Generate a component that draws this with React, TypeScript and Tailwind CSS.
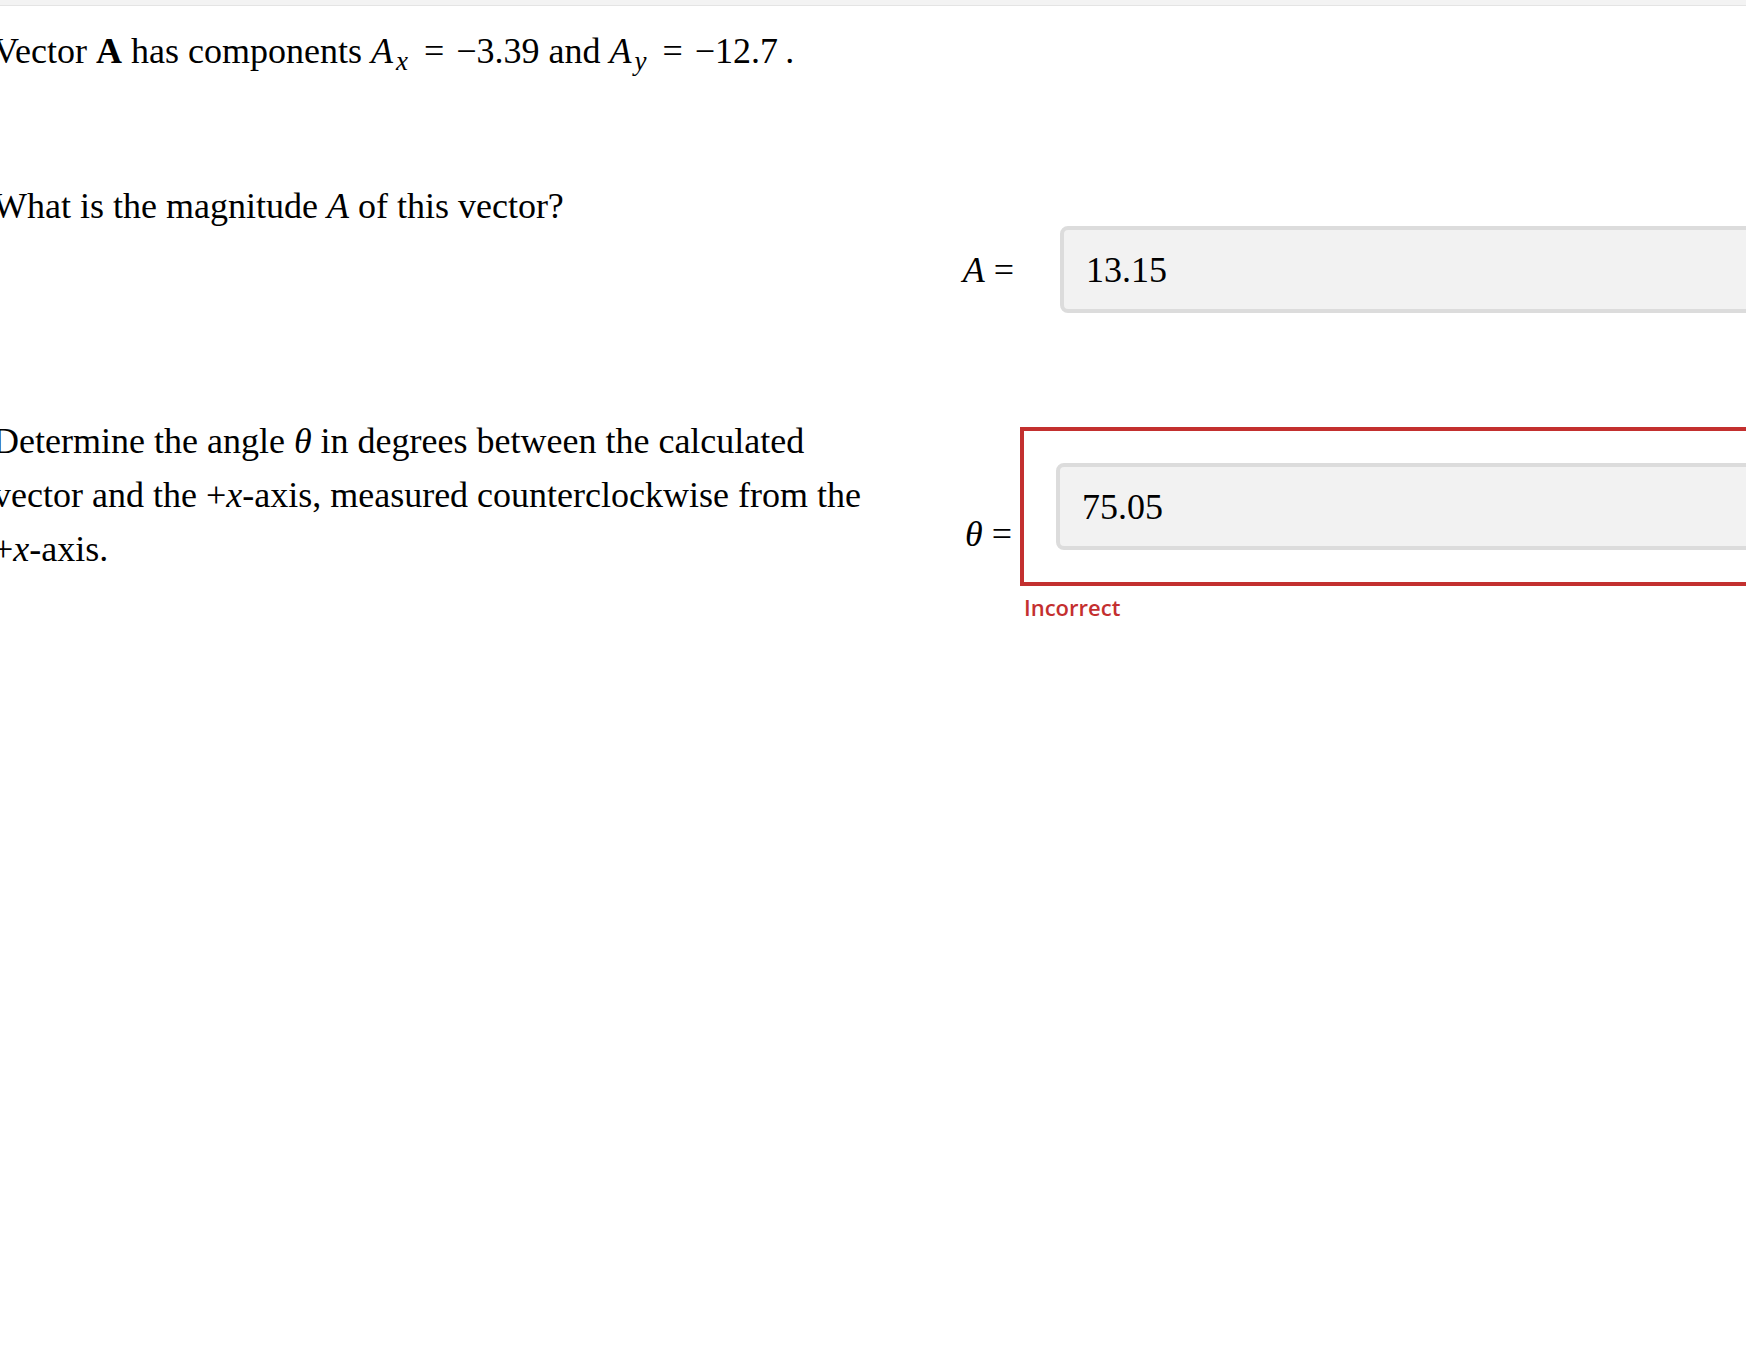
const serif = "font-['Liberation_Serif','Times_New_Roman',serif]";

const Sub = ({ children }: { children: React.ReactNode }) => (
  <sub className="italic text-[27px] ml-[3px]">{children}</sub>
);

const Eq = () => <span className="ml-[16px] mr-[12px]">=</span>;

const AnswerInput = ({ value }: { value: string }) => (
  <div className="h-[87px] w-full flex items-center rounded-[8px] border-[4px] border-[#dcdcdc] bg-[#f2f2f2] pl-[22px]">
    <span className={`${serif} text-[36px] text-black`}>{value}</span>
  </div>
);

const App = () => {
  return (
    <div className="min-h-screen bg-white overflow-hidden">
      {/* top strip */}
      <div className="h-[6px] bg-[#f3f3f3] border-b border-[#e4e4e4]" />

      <div className={`${serif} ml-[-7px] w-[1900px] pt-[18px] text-[36px] leading-[54px] text-black`}>
        {/* Problem statement */}
        <p>
          Vector <b>A</b> has components <i>A</i>
          <Sub>x</Sub>
          <Eq />
          −3.39 and <i>A</i>
          <Sub>y</Sub>
          <Eq />
          −12.7<span className="ml-[7px]">.</span>
        </p>

        {/* Part A: magnitude */}
        <div className="flex items-start mt-[101px]">
          <p className="w-[880px] shrink-0">
            What is the magnitude <i>A</i> of this vector?
          </p>
          <div className="flex flex-1 items-center mt-[47px]">
            <div className="w-[147px] shrink-0 text-right pr-[6px] whitespace-nowrap">
              <i>A</i> =
            </div>
            <div className="flex-1 pl-[40px]">
              <AnswerInput value="13.15" />
            </div>
          </div>
        </div>

        {/* Part B: angle */}
        <div className="flex items-start mt-[101px]">
          <p className="w-[880px] shrink-0">
            Determine the angle <i>θ</i> in degrees between the calculated vector and the +<i>x</i>-axis,
            measured counterclockwise from the +<i>x</i>-axis.
          </p>
          <div className="flex flex-1 items-start mt-[13px]">
            <div className="w-[147px] shrink-0 text-right pr-[8px] whitespace-nowrap mt-[80px]">
              <i>θ</i> =
            </div>
            <div className="flex-1 flex flex-col">
              <div className="border-[4px] border-[#c3302f] p-[32px]">
                <AnswerInput value="75.05" />
              </div>
              <div className="mt-[6px] pl-[4px] font-['Open_Sans',sans-serif] font-semibold text-[22px] leading-[30px] text-[#c42f2f]">
                Incorrect
              </div>
            </div>
          </div>
        </div>
      </div>
    </div>
  );
};

export default App;
